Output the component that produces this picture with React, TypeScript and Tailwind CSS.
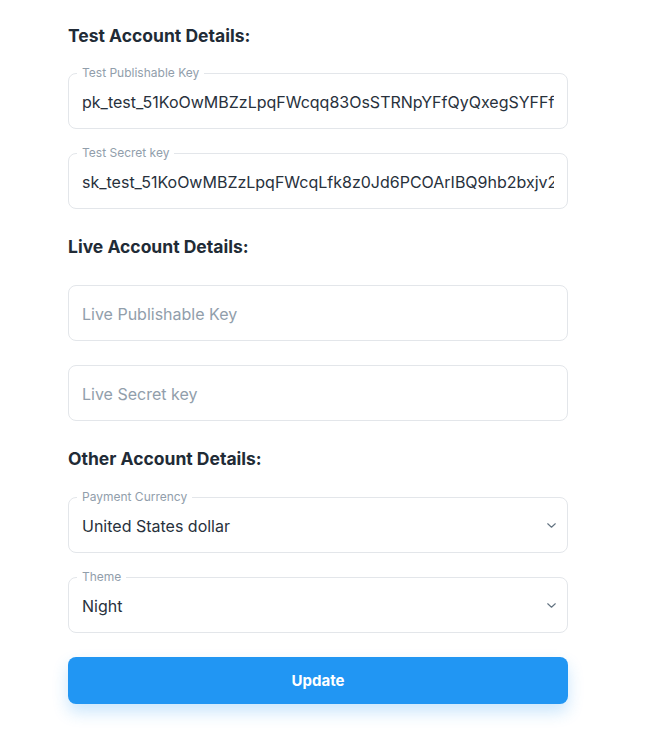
const FONT = "font-['Inter','Noto_Sans',sans-serif]";

interface FieldProps {
  label?: string;
  value?: string;
  placeholder?: string;
}

/* outlined text field with the label sitting on the border */
const KeyField = ({ label, value, placeholder }: FieldProps) => {
  return (
    <div className="relative h-14 rounded-lg border border-[#e3e6ea]">
      {label && (
        <label className="absolute -top-[9px] left-[8px] bg-white px-[5px] text-xs leading-4 text-[#919eab]">
          {label}
        </label>
      )}
      <input
        type="text"
        defaultValue={value}
        placeholder={placeholder}
        className="h-full w-full rounded-lg bg-transparent px-[13px] pt-[1px] text-base text-[#28313c] outline-none placeholder:text-[#919eab]"
      />
    </div>
  );
};

const SelectField = ({ label, value }: FieldProps) => {
  return (
    <div className="relative flex h-14 items-center justify-between rounded-lg border border-[#e3e6ea] pl-[13px] pr-[11px] pt-[1px]">
      <label className="absolute -top-[9px] left-[8px] bg-white px-[5px] text-xs leading-4 text-[#919eab]">
        {label}
      </label>
      <span className="text-base text-[#28313c]">{value}</span>
      <svg width="9" height="5" viewBox="0 0 9 5" fill="none">
        <path d="M0.75 0.75l3.75 3.5 3.75-3.5" stroke="#637381" strokeWidth="1.1" strokeLinecap="round" strokeLinejoin="round" />
      </svg>
    </div>
  );
};

const App = () => {
  return (
    <div className={`min-h-screen bg-white ${FONT}`}>
      <div className="ml-[68px] w-[500px] pt-[23px] pb-6">
        {/* test keys */}
        <h2 className="text-[17.5px] font-bold leading-[25px] text-[#212b36]">Test Account Details:</h2>
        <div className="mt-[25px] flex flex-col gap-6">
          <KeyField label="Test Publishable Key" value="pk_test_51KoOwMBZzLpqFWcqq83OsSTRNpYFfQyQxegSYFFfYq7rWbKd" />
          <KeyField label="Test Secret key" value="sk_test_51KoOwMBZzLpqFWcqLfk8z0Jd6PCOArIBQ9hb2bxjv2jNpL0q" />
        </div>

        {/* live keys */}
        <h2 className="mt-[25px] text-[17.5px] font-bold leading-[25px] text-[#212b36]">Live Account Details:</h2>
        <div className="mt-[26px] flex flex-col gap-6">
          <KeyField placeholder="Live Publishable Key" />
          <KeyField placeholder="Live Secret key" />
        </div>

        {/* other */}
        <h2 className="mt-[25px] text-[17.5px] font-bold leading-[25px] text-[#212b36]">Other Account Details:</h2>
        <div className="mt-[26px] flex flex-col gap-6">
          <SelectField label="Payment Currency" value="United States dollar" />
          <SelectField label="Theme" value="Night" />
          <button className="h-[47px] w-full rounded-lg bg-[#2196f3] pt-[1px] text-[15px] font-bold text-white shadow-[0_8px_16px_0_rgba(33,150,243,0.24)]">
            Update
          </button>
        </div>
      </div>
    </div>
  );
};

export default App;
